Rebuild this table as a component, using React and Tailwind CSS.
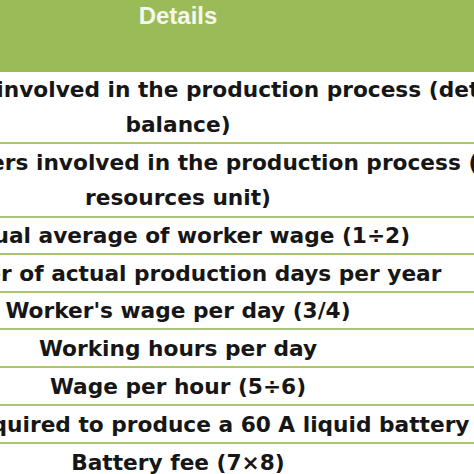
import React from "react";

const rows = [
  {
    lines: ["Number of workers involved in the production process (details of the", "balance)"],
    h: "h-[72px]",
  },
  {
    lines: ["Number of workers involved in the production process (human", "resources unit)"],
    h: "h-[74px]",
  },
  { lines: ["Annual average of worker wage (1÷2)"], h: "h-[37px]" },
  { lines: ["Number of actual production days per year"], h: "h-[38px]" },
  { lines: ["Worker's wage per day (3/4)"], h: "h-[37px]" },
  { lines: ["Working hours per day"], h: "h-[38px]" },
  { lines: ["Wage per hour (5÷6)"], h: "h-[38px]" },
  { lines: ["Hours required to produce a 60 A liquid battery"], h: "h-[38px]" },
  { lines: ["Battery fee (7×8)"], h: "h-[38px]" },
];

const App = () => {
  return (
    <div className="w-[474px] h-[474px] overflow-hidden bg-white">
      <div className="w-[800px] ml-[-222px]">
        {/* Header */}
        <div className="h-[72px] bg-[#9bbb59] pt-[1px] text-center text-[24px] font-bold leading-[30px] text-[#f4f8ec] font-['Liberation_Sans',Arial,sans-serif]">
          Details
        </div>

        {/* Body rows */}
        {rows.map((row, i) => (
          <div
            key={i}
            className={`${row.h} flex flex-col items-center justify-center border-b-2 border-[#a9c673] text-[21.7px] font-bold leading-[35px] text-[#161616] whitespace-nowrap font-['DejaVu_Sans',Verdana,sans-serif]`}
          >
            {row.lines.map((line, j) => (
              <span key={j}>{line}</span>
            ))}
          </div>
        ))}
      </div>
    </div>
  );
};

export default App;
